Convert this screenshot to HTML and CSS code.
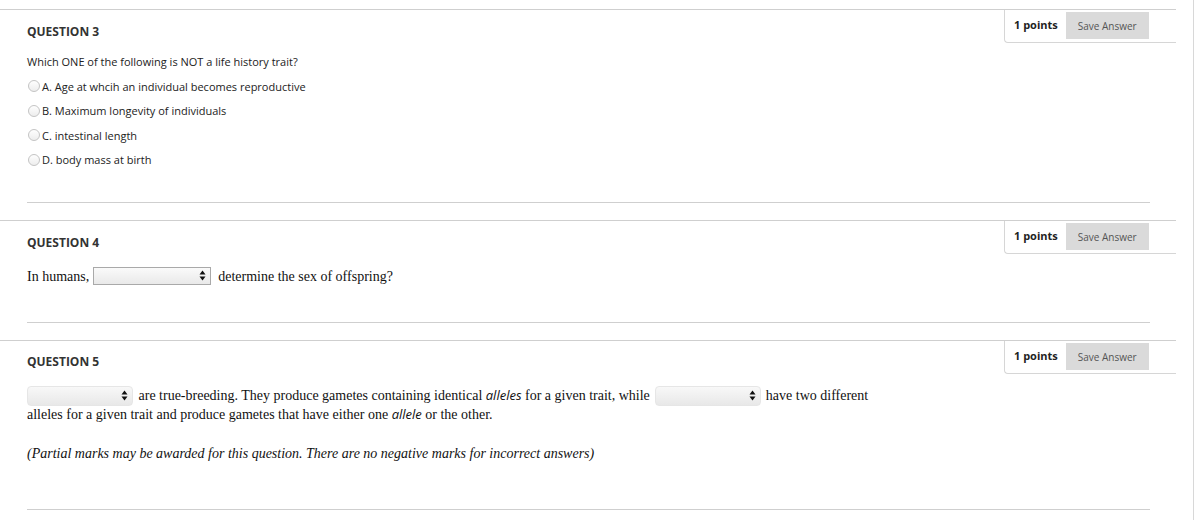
FILE: index.html
```html
<!DOCTYPE html>
<html>
<head>
<meta charset="utf-8">
<link rel="stylesheet" href="styles.css">
</head>
<body>
<div class="page">
  <div class="questions">
    <section class="question q3">
      <div class="q-main">
        <h3 class="q-title">QUESTION 3</h3>
        <p class="q-text">Which ONE of the following is NOT a life history trait?</p>
        <ul class="options">
          <li><span class="radio"></span>A. Age at whcih an individual becomes reproductive</li>
          <li><span class="radio"></span>B. Maximum longevity of individuals</li>
          <li><span class="radio"></span>C. intestinal length</li>
          <li><span class="radio"></span>D. body mass at birth</li>
        </ul>
        <hr class="sep sep3">
      </div>
      <div class="points"><span class="pts">1 points</span><span class="save">Save Answer</span></div>
    </section>

    <section class="question q4">
      <div class="q-main">
        <h3 class="q-title">QUESTION 4</h3>
        <p class="serif-text">In humans, <span class="sel sel-a"><span class="arrows"><svg width="7" height="11" viewBox="0 0 7 11"><path d="M3.5 0.5 L6.5 4.5 L0.5 4.5 Z M3.5 10.5 L6.5 6.5 L0.5 6.5 Z" fill="#111"/></svg></span></span> determine the sex of offspring?</p>
        <hr class="sep sep4">
      </div>
      <div class="points"><span class="pts">1 points</span><span class="save">Save Answer</span></div>
    </section>

    <section class="question q5">
      <div class="q-main">
        <h3 class="q-title">QUESTION 5</h3>
        <p class="serif-text para"><span class="sel sel-b"><span class="arrows"><svg width="7" height="11" viewBox="0 0 7 11"><path d="M3.5 0.5 L6.5 4.5 L0.5 4.5 Z M3.5 10.5 L6.5 6.5 L0.5 6.5 Z" fill="#111"/></svg></span></span> are true-breeding. They produce gametes containing identical <em class="sans-it">alleles</em> for a given trait, while <span class="sel sel-c"><span class="arrows"><svg width="7" height="11" viewBox="0 0 7 11"><path d="M3.5 0.5 L6.5 4.5 L0.5 4.5 Z M3.5 10.5 L6.5 6.5 L0.5 6.5 Z" fill="#111"/></svg></span></span> have two different alleles for a given trait and produce gametes that have either one <em class="sans-it">allele</em> or the other.</p>
        <p class="note">(Partial marks may be awarded for this question. There are no negative marks for incorrect answers)</p>
        <hr class="sep sep5">
      </div>
      <div class="points"><span class="pts">1 points</span><span class="save">Save Answer</span></div>
    </section>
  </div>
</div>
</body>
</html>
```

FILE: styles.css
```css
html, body {
  margin: 0;
  padding: 0;
  background: #fff;
}
body {
  font-family: "Open Sans", "Liberation Sans", sans-serif;
  color: #222;
}
.page {
  width: 1194px;
  height: 520px;
  border-right: 1px solid #d8d8d8;
  padding-top: 9px;
  box-sizing: border-box;
  overflow: hidden;
}
.questions {
  width: 1176px;
}
.question {
  display: flex;
  border-top: 1px solid #cfcfcf;
}
.q-main {
  flex: 1;
  padding-left: 27px;
  padding-bottom: 17px;
  min-width: 0;
}
.q-title {
  margin: 14px 0 0;
  font-size: 12px;
  line-height: 16px;
  font-weight: 700;
  color: #333;
}
.q-text {
  margin: 14px 0 0;
  font-size: 11px;
  line-height: 16px;
  color: #222;
}
.options {
  list-style: none;
  margin: 4px 0 0;
  padding: 0;
}
.options li {
  display: flex;
  align-items: center;
  height: 24.5px;
  font-size: 11px;
  color: #222;
}
.radio {
  width: 12px;
  height: 12px;
  border-radius: 50%;
  border: 1px solid #c4c4c4;
  background: linear-gradient(#fefefe, #ededed);
  margin: 0 2px 0 1px;
  box-sizing: border-box;
}
.sep {
  border: 0;
  border-top: 1px solid #cfcfcf;
  margin: 0;
  margin-right: -146px;
}
.sep3 { margin-top: 30px; }
.points {
  width: 172px;
  height: 33px;
  box-sizing: border-box;
  border-left: 1px solid #d6d6d6;
  border-bottom: 1px solid #d6d6d6;
  border-bottom-left-radius: 4px;
  display: flex;
  align-items: flex-start;
  padding-left: 9px;
  padding-top: 2px;
}
.pts {
  font-size: 11px;
  line-height: 16px;
  font-weight: 700;
  color: #222;
  margin-top: 5px;
}
.save {
  margin-left: 8px;
  width: 83px;
  height: 27px;
  background: #dadada;
  font-size: 10px;
  color: #555;
  display: flex;
  align-items: center;
  justify-content: center;
}
.serif-text {
  font-family: "Liberation Serif", "Times New Roman", serif;
  font-size: 14px;
  line-height: 20px;
  color: #111;
  margin: 0;
}
.q4 .serif-text { margin-top: 16px; }
.sep4 { margin-top: 35px; }
.q5 .q-title { margin-top: 13px; }
.para {
  margin-top: 16px;
  line-height: 19px;
  max-width: 872px;
}
.sel {
  display: inline-block;
  position: relative;
  vertical-align: middle;
  box-sizing: border-box;
  background: linear-gradient(#fafafa, #e9e9e9);
}
.sel-a {
  width: 118px;
  height: 18px;
  border: 1px solid #a9a9a9;
  margin: -3px 4px 0 0;
}
.sel-b, .sel-c {
  height: 20px;
  border-radius: 4px;
  border: 1px solid #e6e6e6;
  background: linear-gradient(#f8f8f8, #e8e8e8);
  margin: -2px 0 -1px;
}
.sel-b { width: 106px; margin-right: 2px; }
.sel-c { width: 106px; margin-left: 2px; margin-right: 1px; }
.arrows {
  position: absolute;
  right: 4px;
  top: 50%;
  margin-top: -6px;
  line-height: 0;
}
.sans-it {
  font-family: "Open Sans", "Liberation Sans", sans-serif;
  font-style: italic;
  font-size: 13px;
}
.note {
  font-family: "Liberation Serif", "Times New Roman", serif;
  font-style: italic;
  font-size: 14px;
  line-height: 16px;
  color: #111;
  margin: 22px 0 0;
}
.sep5 { margin-top: 47px; }
```
